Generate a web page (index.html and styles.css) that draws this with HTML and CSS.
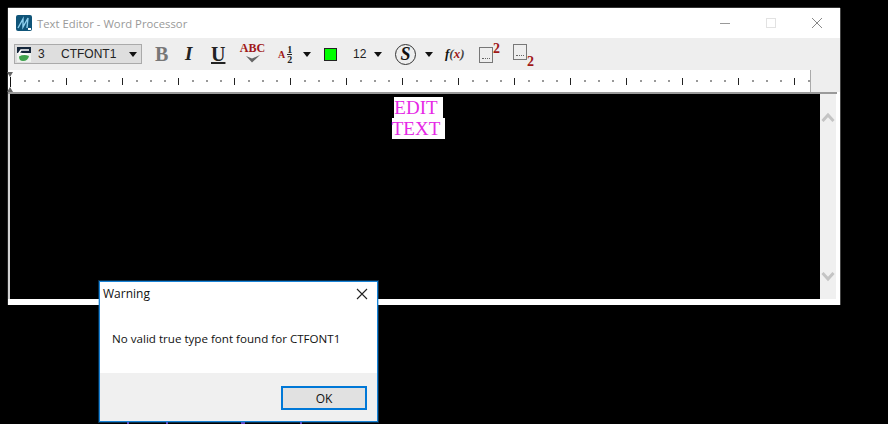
FILE: index.html
```html
<!DOCTYPE html>
<html lang="en">
<head>
<meta charset="utf-8">
<title>Text Editor - Word Processor</title>
<link rel="stylesheet" href="styles.css">
</head>
<body>
<div class="window">
  <header class="titlebar">
    <svg class="logo" width="16" height="16" viewBox="0 0 16 16"><rect width="16" height="16" rx="2" fill="#0f5478"/><path d="M2 13 L7 4 L7 12 L12 3 L11 13" fill="none" stroke="#8fd0ee" stroke-width="1.4"/><rect x="12" y="13" width="3" height="2" fill="#fff"/></svg>
    <span class="title">Text Editor - Word Processor</span>
    <div class="winbtns">
      <svg class="winbtn" width="12" height="12" viewBox="0 0 12 12"><path d="M1 6.5H11" stroke="#999"/></svg>
      <svg class="winbtn" width="12" height="12" viewBox="0 0 12 12"><rect x="1.5" y="1.5" width="9" height="9" fill="none" stroke="#e2e2e2"/></svg>
      <svg class="winbtn" width="12" height="12" viewBox="0 0 12 12"><path d="M1 1L11 11M11 1L1 11" stroke="#888"/></svg>
    </div>
  </header>
  <div class="toolbar">
    <div class="combo">
      <svg class="combo-icon" width="14" height="15" viewBox="0 0 14 15"><rect width="14" height="15" fill="#eef2ee"/><rect width="14" height="6" fill="#14263a"/><path d="M12 3H4L2 6L11 8" fill="none" stroke="#fff" stroke-width="1.6"/><path d="M2 9.5Q7 7 12 9Q11 14 6 14Q2 14 2 9.5Z" fill="#3fa34d"/></svg>
      <span class="combo-num">3</span>
      <span class="combo-name">CTFONT1</span>
      <span class="caret combo-caret"></span>
    </div>
    <span class="tool fmt bold">B</span>
    <span class="tool fmt italic">I</span>
    <span class="tool fmt under">U</span>
    <span class="tool abc">ABC<svg class="check" width="16" height="9" viewBox="0 0 16 9"><path d="M1 2L7 8.5L15 1L7 4.5Z" fill="#666"/></svg></span>
    <span class="tool frac"><span class="frac-a">A</span><span class="frac-n"><span class="frac-top">1</span><span>2</span></span></span>
    <span class="caret caret-frac"></span>
    <span class="swatch"></span>
    <span class="size">12</span>
    <span class="caret caret-size"></span>
    <span class="circle-s">S</span>
    <span class="caret caret-s"></span>
    <span class="fx">f<span class="fx-paren">(</span><span class="fx-x">x</span><span class="fx-paren">)</span></span>
    <span class="script sup"><span class="dotbox"></span><b class="num">2</b></span>
    <span class="script sub"><span class="dotbox"></span><b class="num">2</b></span>
  </div>
  <div class="rulerrow">
    <div class="ruler"><span class="tab-down"></span><span class="tab-bar"></span><span class="tab-up"></span></div>
  </div>
  <div class="editrow">
    <div class="editor">
      <span class="line line1">EDIT</span>
      <span class="line line2">TEXT</span>
    </div>
    <div class="scroll">
      <svg width="14" height="10" viewBox="0 0 14 10"><path d="M1.5 9L7 3L12.5 9" fill="none" stroke="#c4c4c4" stroke-width="3"/></svg>
      <svg width="14" height="10" viewBox="0 0 14 10"><path d="M1.5 1L7 7L12.5 1" fill="none" stroke="#c4c4c4" stroke-width="3"/></svg>
    </div>
  </div>
</div>
<span class="frag frag1"></span>
<span class="frag frag2"></span>
<span class="frag frag3"></span>
<span class="frag frag4"></span>
<div class="dialog">
  <div class="dlg-head"><span>Warning</span>
    <svg width="12" height="12" viewBox="0 0 12 12"><path d="M1 1L11 11M11 1L1 11" stroke="#222" stroke-width="1.1"/></svg>
  </div>
  <div class="dlg-msg">No valid true type font found for CTFONT1</div>
  <div class="dlg-foot"><button class="ok">OK</button></div>
</div>
</body>
</html>
```
FILE: styles.css
```css
* { box-sizing: border-box; }
html, body { margin: 0; height: 100%; }
body { background: #000; overflow: hidden; position: relative; font-family: "Open Sans", "Noto Sans", sans-serif; }
.window { position: absolute; left: 8px; top: 8px; width: 832px; height: 297px; background: #fff; display: flex; flex-direction: column; box-shadow: 0 -1px 0 #333, -1px 0 0 #222, 1px 0 0 #444; }
.titlebar { height: 30px; flex: none; display: flex; align-items: center; padding-left: 8px; background: #fff; }
.logo { flex: none; }
.title { margin-left: 5px; font-size: 11.3px; color: #999; }
.winbtns { margin-left: auto; display: flex; gap: 34px; padding-right: 17px; }
.toolbar { height: 32px; flex: none; background: #eee; display: flex; align-items: center; padding-left: 6px; position: relative; }
.combo { width: 128px; height: 20px; flex: none; background: #dedede; border: 1px solid #aaa; display: flex; align-items: center; padding-left: 2px; font-family: "Liberation Sans", sans-serif; font-size: 12px; color: #222; }
.combo-num { margin-left: 7px; width: 23px; }
.combo-name { flex: 1; }
.caret { width: 0; height: 0; border-left: 4.5px solid transparent; border-right: 4.5px solid transparent; border-top: 5px solid #111; flex: none; }
.combo-caret { margin-right: 4px; }
.tool { flex: none; }
.fmt { font-family: "Liberation Serif", serif; font-size: 20px; font-weight: bold; line-height: 22px; }
.bold { margin-left: 13px; color: #777; width: 14px; }
.italic { margin-left: 16px; color: #222; font-style: italic; width: 9px; font-size: 19px; }
.under { margin-left: 17px; color: #222; text-decoration: underline; width: 14px; }
.abc { margin-left: 15px; width: 25px; color: #a01818; font-family: "Liberation Serif", serif; font-weight: bold; font-size: 12px; line-height: 10px; display: flex; flex-direction: column; align-items: center; margin-top: -3px; }
.check { margin-top: 1px; }
.frac { margin-left: 13px; width: 16px; display: flex; align-items: center; font-family: "Liberation Serif", serif; font-weight: bold; }
.frac-a { color: #a01818; font-size: 10px; }
.frac-n { margin-left: 2px; font-size: 10px; line-height: 9px; display: flex; flex-direction: column; color: #222; }
.frac-top { border-bottom: 1px solid #222; }
.caret-frac { margin-left: 9px; }
.swatch { margin-left: 13px; width: 13px; height: 13px; background: #00ff00; border: 1px solid #222; flex: none; }
.size { margin-left: 16px; width: 14px; font-size: 12px; color: #222; font-family: "Liberation Sans", sans-serif; flex: none; }
.caret-size { margin-left: 7px; }
.circle-s { margin-left: 13px; width: 21px; height: 21px; flex: none; border: 1px solid #333; border-radius: 50%; display: flex; align-items: center; justify-content: center; font-family: "Liberation Serif", serif; font-style: italic; font-weight: bold; font-size: 18px; color: #111; }
.caret-s { margin-left: 9px; }
.fx { margin-left: 12px; width: 22px; flex: none; font-family: "Liberation Serif", serif; font-style: italic; font-weight: bold; font-size: 13px; color: #111; }
.fx-paren { color: #444; }
.fx-x { color: #a01818; }
.script { position: relative; width: 22px; height: 24px; flex: none; }
.sup { margin-left: 12px; }
.sub { margin-left: 12px; }
.dotbox { position: absolute; left: 0; width: 14px; height: 16px; background: #eee; border: 1px solid #777; }
.dotbox::after { content: ""; position: absolute; left: 2px; right: 2px; bottom: 3px; border-bottom: 1px dotted #666; }
.sup .dotbox { top: 5px; }
.sub .dotbox { top: 2px; }
.num { position: absolute; font-family: "Liberation Serif", serif; font-size: 14px; line-height: 14px; color: #a01818; }
.sup .num { left: 14px; top: 0; }
.sub .num { left: 14px; top: 13px; }
.rulerrow { height: 22px; flex: none; background: #eee; }
.ruler { width: 803px; height: 22px; position: relative; border-right: 1px solid #aaa;
  background:
    linear-gradient(90deg, #222 0, #222 1px, #fff 1px, #fff 2px, transparent 2px) 58px 8px / 56px 7px repeat-x,
    linear-gradient(90deg, #999 0, #999 2px, transparent 2px) 16px 10px / 14px 2px repeat-x,
    #fff; }
.tab-down, .tab-up { position: absolute; left: -1px; width: 0; height: 0; border-left: 3.5px solid transparent; border-right: 3.5px solid transparent; }
.tab-down { top: 2px; border-top: 5px solid #666; }
.tab-up { bottom: 0; border-bottom: 5px solid #666; }
.tab-bar { position: absolute; left: 2px; top: 7px; width: 1px; height: 10px; background: #111; }
.editrow { height: 213px; flex: none; display: flex; background: #fff; padding-bottom: 6px; border-top: 2px solid #9a9a9a; margin-right: 3px; }
.editor { flex: none; width: 812px; background: #000; display: flex; flex-direction: column; align-items: center; border-left: 2px solid #d0d0d0; padding: 3px 0 0 7px; font-family: "Liberation Serif", serif; font-size: 19px; line-height: 21px; color: #e628e6; }
.line { display: block; background: #fff; height: 21px; }
.line1 { padding-right: 5px; }
.line2 { padding-right: 5px; }
.scroll { width: 16px; flex: none; background: #f0f0f0; display: flex; flex-direction: column; justify-content: space-between; align-items: center; padding: 18px 0 17px; }
.frag { position: absolute; top: 421px; width: 2px; height: 3px; background: #6a3fc0; }
.frag1 { left: 127px; }
.frag2 { left: 166px; }
.frag3 { left: 241px; width: 4px; }
.frag4 { left: 300px; }
.dialog { position: absolute; left: 99px; top: 281px; width: 279px; height: 141px; background: #fff; border: 1px solid #1883d7; box-shadow: 0 0 0 1px rgba(24, 131, 215, .35); display: flex; flex-direction: column; font-size: 11.6px; color: #111; }
.dlg-head { height: 23px; padding: 0 9px 0 3px; display: flex; align-items: center; justify-content: space-between; flex: none; font-size: 12px; }
.dlg-msg { height: 68px; padding: 26px 0 0 12px; flex: none; }
.dlg-foot { flex: 1; background: #f0f0f0; padding: 13px 10px 0 0; display: flex; justify-content: flex-end; align-items: flex-start; }
.ok { width: 86px; height: 24px; background: #e1e1e1; border: 2px solid #0078d7; font: inherit; font-size: 12px; color: #111; padding: 0; }
```
